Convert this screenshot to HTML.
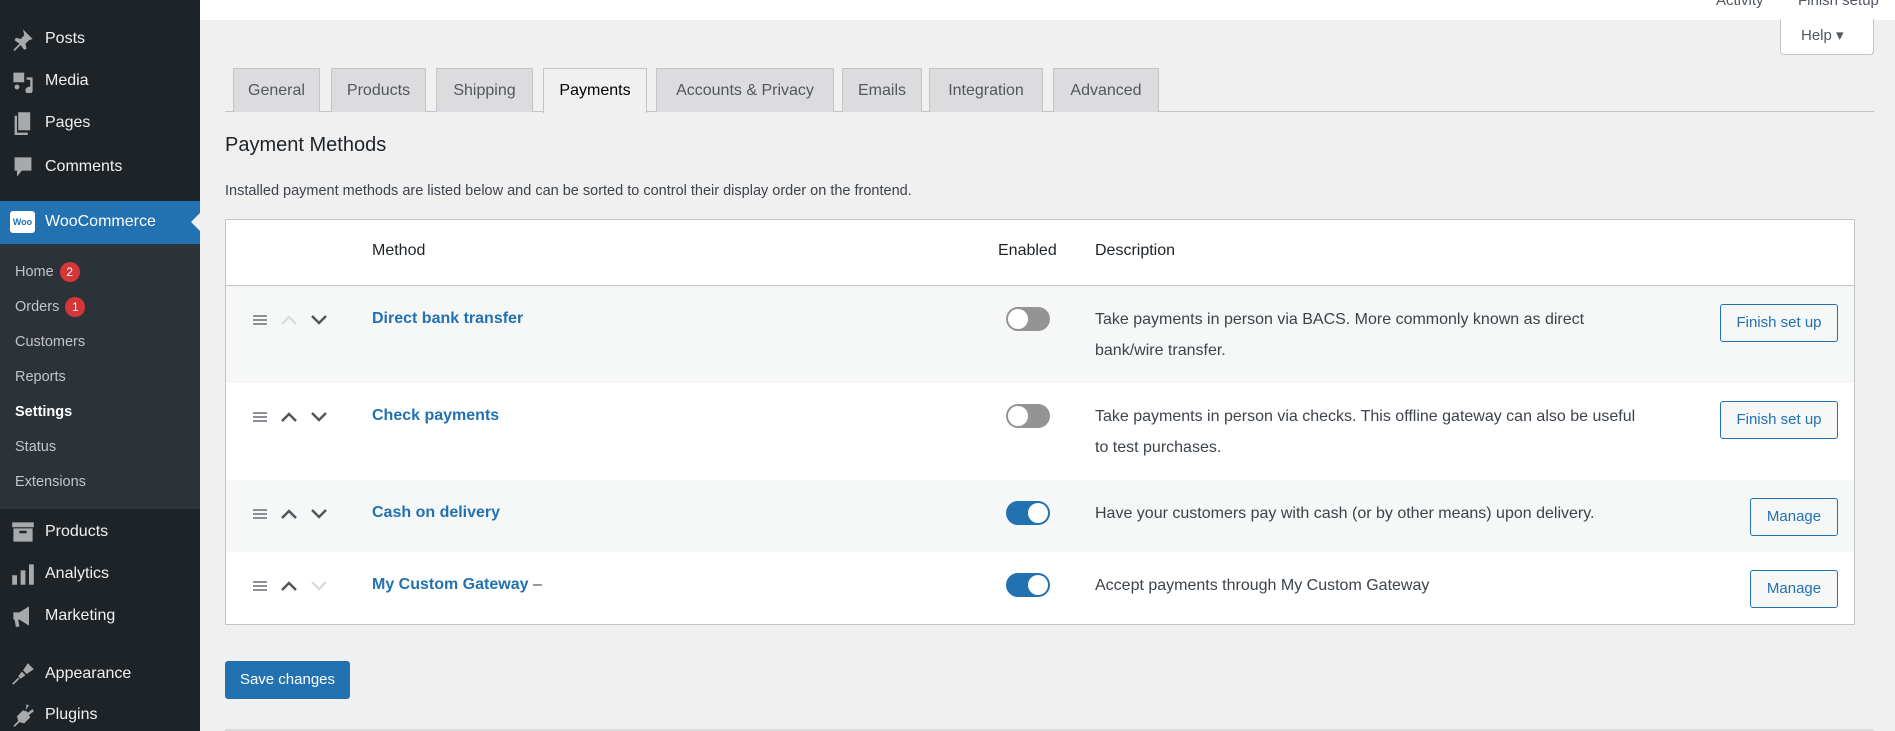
<!DOCTYPE html>
<html><head><meta charset="utf-8"><style>
*{box-sizing:border-box;margin:0;padding:0}
body{width:1895px;height:731px;overflow:hidden;background:#f0f0f1;font-family:"Liberation Sans",sans-serif;color:#3c434a;position:relative}
.a{position:absolute;white-space:nowrap}
#side{position:absolute;left:0;top:0;width:200px;height:731px;background:#1d2327}
.mi{position:absolute;left:45px;color:#f0f0f1;font-size:16px;line-height:20px}
.ic{position:absolute;left:10px;width:26px;height:24px;fill:#a7aaad;margin-top:-2px}
#sub{position:absolute;left:0;top:244px;width:200px;height:265px;background:#2c3338}
.si{position:absolute;left:15px;color:#c3c4c7;font-size:14.5px;line-height:18px}
.badge{display:inline-block;background:#d63638;color:#fff;border-radius:10px;min-width:20px;height:20px;font-size:12px;line-height:20px;text-align:center;margin-left:6px;vertical-align:middle}
.tab{position:absolute;top:68px;height:44px;background:#dcdcde;border:1px solid #c3c4c7;border-bottom:none;font-size:16px;color:#50575e;text-align:center;line-height:44px}
.tab.on{background:#f0f0f1;color:#000;height:45px}
#tbl{position:absolute;left:225px;top:219px;width:1630px;height:406px;background:#fff;border:1px solid #c3c4c7}
.row{position:absolute;left:0;width:1628px}
.name{position:absolute;left:146px;color:#2271b1;font-weight:bold;font-size:16px}
.desc{position:absolute;left:869px;font-size:16px;line-height:31px;color:#3c434a}
.tg{position:absolute;left:780px;width:44px;height:24px;border-radius:12px;background:#949494}
.tg::after{content:"";position:absolute;left:2px;top:2px;width:20px;height:20px;border-radius:50%;background:#fff}
.tg.on{background:#2271b1}.tg.on::after{left:22px}
.btn{position:absolute;right:16px;height:38px;border:1px solid #2271b1;border-radius:3px;color:#2271b1;background:#f6f7f7;font-size:15px;line-height:36px;text-align:center}
.ctl{position:absolute;left:27px}
</style></head><body>
<div class="a" style="left:200px;top:0;width:1695px;height:20px;background:#fff"></div>
<div class="a" style="left:1716px;top:-8px;font-size:15px;color:#50575e">Activity</div>
<div class="a" style="left:1798px;top:-8px;font-size:15px;color:#50575e">Finish setup</div>
<div class="a" style="left:1780px;top:19px;width:94px;height:36px;background:#fff;border:1px solid #c3c4c7;border-top:none;border-radius:0 0 4px 4px;font-size:15px;line-height:34px;color:#50575e;padding-left:20px">Help ▾</div>

<div id="side">
<svg class="ic" style="top:29px" viewBox="0 0 20 20"><path d="M10 2l8 8-3 1-3 3 1 4-2 1-3-4-5 5-1-1 5-5-4-3 1-2 4 1 3-3z"/></svg>
<div class="mi" style="top:29px">Posts</div>
<svg class="ic" style="top:71px" viewBox="0 0 20 20"><path d="M2 3h9v8H2zM13 7h5v11a3 3 0 1 1-2-3V9h-3zM5 13a2 2 0 1 1 0 4 2 2 0 0 1 0-4z"/></svg>
<div class="mi" style="top:71px">Media</div>
<svg class="ic" style="top:113px" viewBox="0 0 20 20"><path d="M6 1h10v15H6zM3 4h2v14h9v2H3z"/></svg>
<div class="mi" style="top:113px">Pages</div>
<svg class="ic" style="top:157px" viewBox="0 0 20 20"><path d="M3 2h14v11H9l-4 5v-5H3z"/></svg>
<div class="mi" style="top:157px">Comments</div>
<div class="a" style="left:0;top:201px;width:200px;height:43px;background:#2271b1"></div>
<div class="a" style="left:10px;top:211px;width:25px;height:22px;background:#fff;border-radius:3px;color:#2271b1;font-size:9px;font-weight:bold;line-height:22px;text-align:center">Woo</div>
<div class="mi" style="top:212px;color:#fff">WooCommerce</div>
<div class="a" style="left:191px;top:213px;width:0;height:0;border-top:9px solid transparent;border-bottom:9px solid transparent;border-right:9px solid #f0f0f1"></div>
<div id="sub">
<div class="si" style="top:18px">Home<span class="badge">2</span></div>
<div class="si" style="top:53px">Orders<span class="badge">1</span></div>
<div class="si" style="top:89px">Customers</div>
<div class="si" style="top:124px">Reports</div>
<div class="si" style="top:159px;color:#fff;font-weight:bold">Settings</div>
<div class="si" style="top:194px">Status</div>
<div class="si" style="top:229px">Extensions</div>
</div>
<svg class="ic" style="top:522px" viewBox="0 0 20 20"><path d="M1 2h18v4H1zM2 7h16v11H2zM7 9v2h6V9z"/></svg>
<div class="mi" style="top:522px">Products</div>
<svg class="ic" style="top:564px" viewBox="0 0 20 20"><path d="M1 11h4v8H1zM8 7h4v12H8zM15 2h4v17h-4z"/></svg>
<div class="mi" style="top:564px">Analytics</div>
<svg class="ic" style="top:606px" viewBox="0 0 20 20"><path d="M2 7h5l8-5v16l-8-5H6l1 6H4l-1-6H2z"/></svg>
<div class="mi" style="top:606px">Marketing</div>
<svg class="ic" style="top:664px" viewBox="0 0 20 20"><path d="M14 1l5 5-6 4-3-3zM9 8l3 3-4 3-2-2zM6 13l1 1-5 5-1-1z"/></svg>
<div class="mi" style="top:664px">Appearance</div>
<svg class="ic" style="top:705px" viewBox="0 0 20 20"><path d="M13 1l2 1-3 4 2 2 4-3 1 2-4 3 1 2-5 5-4-1-4 4-1-1 4-4-1-4 5-5 2 1z"/></svg>
<div class="mi" style="top:705px">Plugins</div>
</div>

<div class="a" style="left:225px;top:111px;width:1649px;height:1px;background:#c3c4c7"></div>
<div class="tab" style="left:233px;width:87px">General</div>
<div class="tab" style="left:331px;width:95px">Products</div>
<div class="tab" style="left:436px;width:97px">Shipping</div>
<div class="tab on" style="left:543px;width:104px">Payments</div>
<div class="tab" style="left:656px;width:178px">Accounts &amp; Privacy</div>
<div class="tab" style="left:842px;width:80px">Emails</div>
<div class="tab" style="left:929px;width:114px">Integration</div>
<div class="tab" style="left:1053px;width:106px">Advanced</div>

<div class="a" style="left:225px;top:134px;font-size:20px;color:#1d2327">Payment Methods</div>
<div class="a" style="left:225px;top:183px;font-size:14.5px;color:#3c434a">Installed payment methods are listed below and can be sorted to control their display order on the frontend.</div>

<div id="tbl">
<div class="row" style="top:0;height:66px;border-bottom:1px solid #c3c4c7">
<div class="a" style="left:146px;top:22px;font-size:16px;color:#1d2327">Method</div>
<div class="a" style="left:772px;top:22px;font-size:16px;color:#1d2327">Enabled</div>
<div class="a" style="left:869px;top:22px;font-size:16px;color:#1d2327">Description</div>
</div>
<div class="row" style="top:66px;height:97px;background:#f6f7f7">
<svg class="ctl" style="top:24px" width="80" height="20" viewBox="0 0 80 20"><path d="M0 6h14M0 10h14M0 14h14" stroke="#8c8f94" stroke-width="2"/><path d="M29 14l7-7 7 7" stroke="#dcdcde" stroke-width="2.5" fill="none"/><path d="M59 6l7 7 7-7" stroke="#50575e" stroke-width="2.5" fill="none"/></svg>
<div class="name" style="top:24px">Direct bank transfer</div>
<div class="tg" style="top:21px"></div>
<div class="desc" style="top:18px">Take payments in person via BACS. More commonly known as direct<br>bank/wire transfer.</div>
<div class="btn" style="top:18px;width:118px">Finish set up</div>
</div>
<div class="row" style="top:163px;height:97px;background:#fff">
<svg class="ctl" style="top:24px" width="80" height="20" viewBox="0 0 80 20"><path d="M0 6h14M0 10h14M0 14h14" stroke="#8c8f94" stroke-width="2"/><path d="M29 14l7-7 7 7" stroke="#50575e" stroke-width="2.5" fill="none"/><path d="M59 6l7 7 7-7" stroke="#50575e" stroke-width="2.5" fill="none"/></svg>
<div class="name" style="top:24px">Check payments</div>
<div class="tg" style="top:21px"></div>
<div class="desc" style="top:18px">Take payments in person via checks. This offline gateway can also be useful<br>to test purchases.</div>
<div class="btn" style="top:18px;width:118px">Finish set up</div>
</div>
<div class="row" style="top:260px;height:72px;background:#f6f7f7">
<svg class="ctl" style="top:24px" width="80" height="20" viewBox="0 0 80 20"><path d="M0 6h14M0 10h14M0 14h14" stroke="#8c8f94" stroke-width="2"/><path d="M29 14l7-7 7 7" stroke="#50575e" stroke-width="2.5" fill="none"/><path d="M59 6l7 7 7-7" stroke="#50575e" stroke-width="2.5" fill="none"/></svg>
<div class="name" style="top:24px">Cash on delivery</div>
<div class="tg on" style="top:21px"></div>
<div class="desc" style="top:18px">Have your customers pay with cash (or by other means) upon delivery.</div>
<div class="btn" style="top:18px;width:88px">Manage</div>
</div>
<div class="row" style="top:332px;height:72px;background:#fff">
<svg class="ctl" style="top:24px" width="80" height="20" viewBox="0 0 80 20"><path d="M0 6h14M0 10h14M0 14h14" stroke="#8c8f94" stroke-width="2"/><path d="M29 14l7-7 7 7" stroke="#50575e" stroke-width="2.5" fill="none"/><path d="M59 6l7 7 7-7" stroke="#dcdcde" stroke-width="2.5" fill="none"/></svg>
<div class="name" style="top:24px">My Custom Gateway <span style="font-weight:normal;color:#3c434a">–</span></div>
<div class="tg on" style="top:21px"></div>
<div class="desc" style="top:18px">Accept payments through My Custom Gateway</div>
<div class="btn" style="top:18px;width:88px">Manage</div>
</div>
</div>

<div class="a" style="left:225px;top:661px;width:125px;height:38px;background:#2271b1;border-radius:3px;color:#fff;font-size:15px;line-height:38px;text-align:center">Save changes</div>
<div class="a" style="left:225px;top:729px;width:1649px;height:2px;background:#dcdcde"></div>
</body></html>
